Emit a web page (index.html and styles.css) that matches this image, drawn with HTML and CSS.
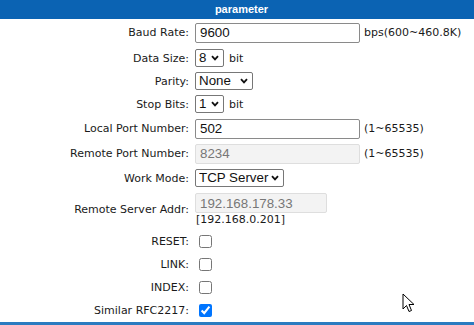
FILE: index.html
```html
<!DOCTYPE html>
<html>
<head>
<meta charset="utf-8">
<link rel="stylesheet" href="styles.css">
</head>
<body>
<div class="panel">
  <div class="head">parameter</div>
  <div class="form">
    <div class="lbl">Baud Rate:</div>
    <div class="val"><input class="txt wide" type="text" value="9600"><span class="note">bps(600~460.8K)</span></div>

    <div class="lbl">Data Size:</div>
    <div class="val"><span class="selwrap"><select class="sel small"><option>8</option></select><svg class="chev" width="8" height="6" viewBox="0 0 8 6"><path d="M1 1.2 L4 4.4 L7 1.2" fill="none" stroke="#111" stroke-width="1.8"/></svg></span><span class="unit">bit</span></div>

    <div class="lbl">Parity:</div>
    <div class="val"><span class="selwrap"><select class="sel mid"><option>None</option></select><svg class="chev" width="8" height="6" viewBox="0 0 8 6"><path d="M1 1.2 L4 4.4 L7 1.2" fill="none" stroke="#111" stroke-width="1.8"/></svg></span></div>

    <div class="lbl">Stop Bits:</div>
    <div class="val"><span class="selwrap"><select class="sel small"><option>1</option></select><svg class="chev" width="8" height="6" viewBox="0 0 8 6"><path d="M1 1.2 L4 4.4 L7 1.2" fill="none" stroke="#111" stroke-width="1.8"/></svg></span><span class="unit">bit</span></div>

    <div class="lbl">Local Port Number:</div>
    <div class="val"><input class="txt wide" type="text" value="502"><span class="note">(1~65535)</span></div>

    <div class="lbl">Remote Port Number:</div>
    <div class="val"><input class="txt wide" type="text" value="8234" disabled><span class="note">(1~65535)</span></div>

    <div class="lbl">Work Mode:</div>
    <div class="val"><span class="selwrap"><select class="sel large"><option>TCP Server</option></select><svg class="chev" width="8" height="6" viewBox="0 0 8 6"><path d="M1 1.2 L4 4.4 L7 1.2" fill="none" stroke="#111" stroke-width="1.8"/></svg></span></div>

    <div class="lbl">Remote Server Addr:</div>
    <div class="val stack"><input class="txt narrow" type="text" value="192.168.178.33" disabled><span class="ip">[192.168.0.201]</span></div>

    <div class="lbl">RESET:</div>
    <div class="val"><input class="chk" type="checkbox"></div>

    <div class="lbl">LINK:</div>
    <div class="val"><input class="chk" type="checkbox"></div>

    <div class="lbl">INDEX:</div>
    <div class="val"><input class="chk" type="checkbox"></div>

    <div class="lbl">Similar RFC2217:</div>
    <div class="val"><input class="chk" type="checkbox" checked></div>
  </div>
  <div class="foot"></div>
  <svg class="cursor" width="13" height="20" viewBox="0 0 13 20"><path d="M1 1 L1 16 L4.5 12.5 L7 18.5 L9.5 17.5 L7 11.5 L12 11.5 Z" fill="#fff" stroke="#000" stroke-width="1" stroke-linejoin="round"/></svg>
</div>
</body>
</html>
```
FILE: styles.css
```css
html, body {
  margin: 0;
  padding: 0;
  background: #fff;
}
.panel {
  position: relative;
  width: 474px;
  height: 325px;
  overflow: hidden;
  font-family: "DejaVu Sans", Verdana, sans-serif;
  font-size: 11px;
  color: #1a1a1a;
}
.head {
  height: 19px;
  line-height: 19px;
  background: #0b63b3;
  color: #fff;
  font-family: "Liberation Sans", Arial, sans-serif;
  font-weight: bold;
  font-size: 11px;
  text-align: center;
  padding-left: 9px;
}
.form {
  display: grid;
  grid-template-columns: 195px 1fr;
  grid-template-rows: 27px 24px 22px 24px 25px 25px 24px 39px 24px 23px 23px 23px;
}
.lbl {
  display: flex;
  align-items: center;
  justify-content: flex-end;
  padding-right: 6px;
  white-space: nowrap;
}
.val {
  display: flex;
  align-items: center;
  white-space: nowrap;
}
.val.stack {
  flex-direction: column;
  align-items: flex-start;
  justify-content: flex-start;
  padding-top: 3px;
}
.txt {
  box-sizing: border-box;
  height: 20px;
  margin: 0;
  padding: 0 4px;
  border: 1px solid #8a8a8a;
  border-radius: 2px;
  font-family: "Liberation Sans", Arial, sans-serif;
  font-size: 13.33px;
  color: #111;
  background: #fff;
}
.txt:disabled {
  background: #f3f3f3;
  border-color: #dedede;
  color: #777;
}
.wide { width: 165px; }
.narrow { width: 132px; }
.note {
  margin-left: 4px;
}
.unit {
  margin-left: 5px;
}
.ip {
  margin-left: 1px;
  line-height: 14px;
}
.selwrap {
  position: relative;
  display: inline-flex;
}
.sel {
  box-sizing: border-box;
  height: 18px;
  margin: 0;
  padding: 0 0 0 3px;
  border: 1px solid #777;
  border-radius: 2px;
  font-family: "Liberation Sans", Arial, sans-serif;
  font-size: 13.33px;
  line-height: 16px;
  color: #111;
  background: #fff;
  -webkit-appearance: none;
  appearance: none;
}
.chev {
  position: absolute;
  right: 5px;
  top: 6px;
  pointer-events: none;
}
.small { width: 29px; }
.mid { width: 58px; }
.large { width: 89px; }
.chk {
  width: 13px;
  height: 13px;
  margin: 0 0 0 4px;
}
.foot {
  height: 3px;
  background: #2a7bc0;
}
.cursor {
  position: absolute;
  left: 402px;
  top: 293px;
}
```
